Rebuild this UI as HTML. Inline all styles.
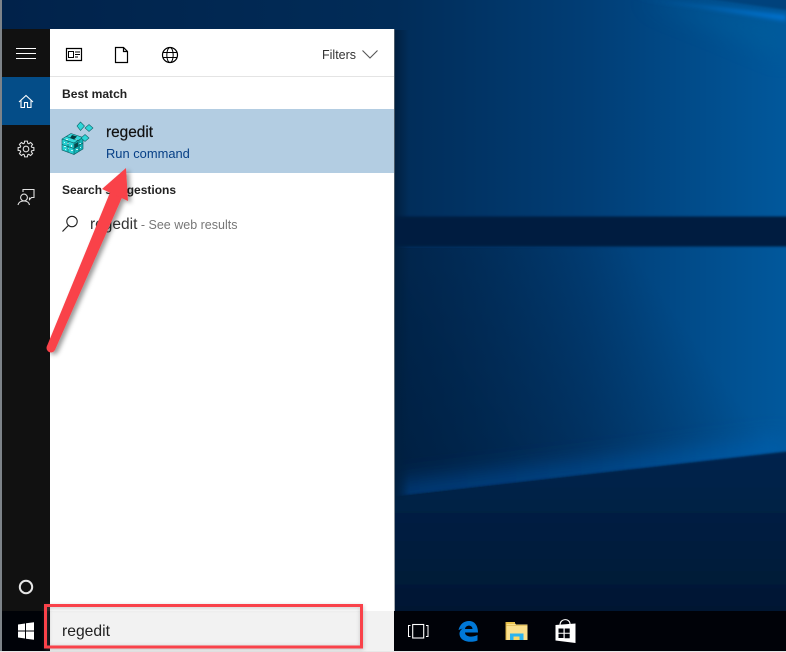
<!DOCTYPE html>
<html><head><meta charset="utf-8">
<style>
html,body{margin:0;padding:0;background:#000}
#r{position:relative;width:786px;height:652px;overflow:hidden;font-family:"Liberation Sans",sans-serif}
.a{position:absolute}
.t{position:absolute;white-space:nowrap;line-height:18px;height:18px}
svg{position:absolute;left:0;top:0;overflow:visible}
</style></head><body>
<div id="r">
<svg width="786" height="652" viewBox="0 0 786 652">
<defs>
<linearGradient id="h" gradientUnits="userSpaceOnUse" x1="394" x2="786" y1="0" y2="0"><stop offset="0" stop-color="#012c58"/><stop offset=".5" stop-color="#013e76"/><stop offset="1" stop-color="#01589c"/></linearGradient>
<linearGradient id="tl" gradientUnits="userSpaceOnUse" x1="0" x2="394" y1="0" y2="0"><stop offset="0" stop-color="#01224a"/><stop offset="1" stop-color="#012c58"/></linearGradient>
<linearGradient id="dk" gradientUnits="userSpaceOnUse" x1="394" y1="480" x2="660" y2="290"><stop offset="0" stop-color="#001c3c" stop-opacity=".8"/><stop offset="1" stop-color="#001c3c" stop-opacity="0"/></linearGradient>
<linearGradient id="low" x1="0" x2="0" y1="0" y2="1"><stop offset="0" stop-color="#00254e"/><stop offset="1" stop-color="#00152e"/></linearGradient>
<linearGradient id="glow" gradientUnits="userSpaceOnUse" x1="394" x2="786" y1="0" y2="0"><stop offset="0" stop-color="#003a78"/><stop offset=".5" stop-color="#004688"/><stop offset="1" stop-color="#005fac"/></linearGradient>
<linearGradient id="lf" x1="0" x2="1" y1="0" y2="0"><stop offset="0" stop-color="#012040"/><stop offset="1" stop-color="#012040" stop-opacity="0"/></linearGradient>
<linearGradient id="streak" gradientUnits="userSpaceOnUse" x1="620" x2="786" y1="0" y2="0"><stop offset="0" stop-color="#0163b0" stop-opacity="0"/><stop offset=".4" stop-color="#0168bc"/><stop offset="1" stop-color="#0172d0"/></linearGradient>
<filter id="b12" filterUnits="userSpaceOnUse" x="0" y="-50" width="900" height="800"><feGaussianBlur stdDeviation="11"/></filter>
<filter id="b3" filterUnits="userSpaceOnUse" x="0" y="-50" width="900" height="800"><feGaussianBlur stdDeviation="2.2"/></filter>
<filter id="b1" filterUnits="userSpaceOnUse" x="0" y="-50" width="900" height="800"><feGaussianBlur stdDeviation="1"/></filter>
<filter id="sh" filterUnits="userSpaceOnUse" x="0" y="100" width="300" height="300"><feDropShadow dx="3" dy="2" stdDeviation="2.5" flood-color="#000" flood-opacity=".4"/></filter>
<clipPath id="sl"><polygon points="394,0 786,0 786,452 394,497"/></clipPath>
<clipPath id="bg"><rect x="0" y="0" width="786" height="611"/></clipPath>
</defs>
<g clip-path="url(#bg)">
<rect width="786" height="611" x="0" y="0" fill="url(#h)"/>
<rect x="0" y="0" width="394" height="30" fill="url(#tl)"/>
<!-- lower-left darkening -->
<rect x="394" y="248" width="392" height="255" fill="url(#dk)"/>
<!-- top streak -->
<polygon points="640,0 786,18 786,60 720,32" fill="#01629f" filter="url(#b12)" opacity=".45"/>
<polygon points="620,-3 786,15 786,21 700,7" fill="url(#streak)" filter="url(#b3)"/>
<polygon points="660,-8 800,-8 800,12 730,2" fill="#01427c" filter="url(#b1)"/>
<!-- glow above slant -->
<g clip-path="url(#sl)"><polygon points="394,510 786,465 786,438 394,483" fill="url(#glow)" filter="url(#b12)"/></g>
<!-- lower part -->
<polygon points="380,498 800,450 800,640 380,640" fill="url(#low)" filter="url(#b1)"/>
<rect x="395" y="30" width="14" height="470" fill="url(#lf)"/>
<!-- band -->
<rect x="380" y="216.5" width="420" height="30" fill="#011f41" filter="url(#b1)"/>
</g>
<rect x="0" y="0" width="2" height="652" fill="#7d8389"/>
</svg>

<div class="a" style="left:2px;top:29px;width:48px;height:582px;background:#111"></div>
<div class="a" style="left:2px;top:77px;width:48px;height:48px;background:#044d88"></div>
<div class="a" style="left:50px;top:29px;width:344px;height:582px;background:#fff"></div>
<div class="a" style="left:394px;top:29px;width:1px;height:582px;background:linear-gradient(#4a5a68 50%,#a8adb2)"></div>
<div class="a" style="left:50px;top:76px;width:344px;height:1px;background:#e4e4e4"></div>
<div class="a" style="left:50px;top:109px;width:344px;height:64px;background:#b3cde2"></div>
<div class="a" style="left:2px;top:611px;width:784px;height:40px;background:#000208"></div>
<div class="a" style="left:50px;top:611px;width:344px;height:40px;background:#f2f2f2"></div>
<div class="a" style="left:0;top:651px;width:786px;height:1px;background:#e8e8e8"></div>

<div class="t" style="left:62px;top:85px;font-size:12.1px;font-weight:bold;color:#222">Best match</div>
<div class="t" style="left:106px;top:124px;font-size:15.4px;color:#111;-webkit-text-stroke:.2px #111">regedit</div>
<div class="t" style="left:106px;top:145px;font-size:12.9px;color:#063f86">Run command</div>
<div class="t" style="left:62px;top:181px;font-size:12px;font-weight:bold;color:#222">Search suggestions</div>
<div class="t" style="left:90px;top:216px;font-size:15.5px;color:#333">regedit<span style="font-size:12.5px;color:#777"> - See web results</span></div>
<div class="t" style="left:322px;top:46px;font-size:12.5px;color:#333">Filters</div>
<div class="t" style="left:62px;top:623px;font-size:15.7px;color:#222">regedit</div>

<svg width="786" height="652" viewBox="0 0 786 652">
<!-- hamburger -->
<path d="M16 48.5H36M16 53.5H36M16 58.5H36" stroke="#fff" stroke-width="1" fill="none"/>
<!-- home -->
<path d="M19 102L26 95.5L33 102M21 100.5V107.5H24.5V102.5H27.5V107.5H31V100.5" stroke="#fff" stroke-width="1.1" fill="none"/>
<!-- gear -->
<g transform="translate(26 149)" stroke="#e0e0e0" stroke-width="1.1" fill="none">
<circle r="2.8"/>
<path d="M5.74 -1.75L7.88 -1.39L7.88 1.39L5.74 1.75L5.30 2.82L6.55 4.59L4.59 6.55L2.82 5.30L1.75 5.74L1.39 7.88L-1.39 7.88L-1.75 5.74L-2.82 5.30L-4.59 6.55L-6.55 4.59L-5.30 2.82L-5.74 1.75L-7.88 1.39L-7.88 -1.39L-5.74 -1.75L-5.30 -2.82L-6.55 -4.59L-4.59 -6.55L-2.82 -5.30L-1.75 -5.74L-1.39 -7.88L1.39 -7.88L1.75 -5.74L2.82 -5.30L4.59 -6.55L6.55 -4.59L5.30 -2.82Z"/>
</g>
<!-- feedback -->
<circle cx="24" cy="197.5" r="3.4" stroke="#e0e0e0" stroke-width="1.1" fill="none"/>
<path d="M18 205C18.5 202.5 20.5 201 24 201C27 201 29 202.5 29.5 205M23 192V189.5H34V197.5H31.5L29.5 199.5V197.5" stroke="#e0e0e0" stroke-width="1.1" fill="none"/>
<!-- cortana -->
<circle cx="26" cy="587" r="6.2" stroke="#e6e6e6" stroke-width="2" fill="none"/>
<!-- windows -->
<path d="M18 624.5L25 623.5V630.5H18ZM26 623.3L34 622.3V630.5H26ZM18 631.5H25V638.5L18 637.5ZM26 631.5H34V639.7L26 638.7Z" fill="#fff"/>
<!-- news -->
<path d="M66.5 48.5H81.5V60.5H66.5Z" stroke="#000" stroke-width="1.2" fill="none"/>
<path d="M68.5 51.5H73.5V57.5H68.5ZM75 52H80M75 54.5H80M75 57H78" stroke="#000" stroke-width="1" fill="none"/>
<!-- doc -->
<path d="M115.5 47.5H123.5L127.5 51.5V62.5H115.5ZM123.5 47.5V51.5H127.5" stroke="#000" stroke-width="1.2" fill="none"/>
<!-- globe -->
<circle cx="170" cy="55" r="7.5" stroke="#000" stroke-width="1.2" fill="none"/>
<ellipse cx="170" cy="55" rx="3.2" ry="7.5" stroke="#000" stroke-width="1" fill="none"/>
<path d="M163 52.5H177M163 57.5H177" stroke="#000" stroke-width="1" fill="none"/>
<!-- chevron -->
<path d="M362.5 50.5L370 58L377.5 50.5" stroke="#555" stroke-width="1.1" fill="none"/>
<!-- search icon -->
<circle cx="72" cy="221.5" r="5.2" stroke="#222" stroke-width="1.1" fill="none"/>
<path d="M68.3 225.5L62.5 231.5" stroke="#222" stroke-width="1.2" fill="none"/>
<!-- regedit icon -->
<polygon points="62,139 74,143 74,154.5 62,150" fill="#27cfd2"/>
<polygon points="74,143 83,137.5 83,149 74,154.5" fill="#14b4b8"/>
<polygon points="62,139 71,133.5 83,137.5 74,143" fill="#35d8da"/>
<g fill="#c8f8f8">
<rect x="64" y="142" width="1" height="1"/><rect x="67" y="143" width="2" height="1"/><rect x="71" y="145" width="1" height="2"/>
<rect x="64" y="146" width="2" height="1"/><rect x="68" y="148" width="1" height="1"/><rect x="71" y="150" width="2" height="1"/>
<rect x="65" y="149" width="1" height="1"/><rect x="76" y="144" width="1" height="1"/><rect x="79" y="143" width="2" height="1"/>
<rect x="76" y="149" width="2" height="1"/><rect x="80" y="147" width="1" height="1"/><rect x="66" y="139" width="2" height="1"/>
<rect x="72" y="137" width="1" height="1"/><rect x="75" y="139" width="2" height="1"/>
</g>
<path d="M62 139L74 143L83 137.5M74 143V154.5M62 144.5L74 148.5L83 143M68 141V152.5M79 140V151M66.5 136.5L78 140.5M71 133.5L62 139V150L74 154.5L83 149V137.5L71 133.5" stroke="#06585c" stroke-width=".6" fill="none"/>
<polygon points="72,135 77,136.5 74,139.5 70,138" fill="#073b3e"/>
<polygon points="74.5,144 78,142 78,146.5 74.5,148.5" fill="#0a4a4e"/>
<g stroke="#0b6468" stroke-width=".6">
<polygon points="80.5,122 84.5,126 80.5,130.5 77,126" fill="#2fd6d8"/>
<polygon points="89,124.5 93,128 89,131.5 85,128" fill="#2fd6d8"/>
<polygon points="85,134.5 89,138 85,141.5 81,138" fill="#2fd6d8"/>
</g>
<!-- task view -->
<rect x="412.7" y="624.5" width="11" height="13.5" stroke="#fff" stroke-width="1.1" fill="none"/>
<path d="M410.5 625.5H408.5V636.5H410.5M426 625.5H428V636.5H426" stroke="#fff" stroke-width="1" fill="none"/>
<!-- edge -->
<path d="M458.5 630C460 624 464 621 469 621C475 621 478 626 478 632.5H465C465 636.5 471 638 477.5 635V640.5C470 643.5 459 641.5 459.5 633C460 630.5 462 628.5 464.5 627.5C463 628.5 461 629 458.5 630ZM465 629H472.5C472.5 624.5 465.5 624.5 465 629Z" fill="#0078d7" fill-rule="evenodd"/>
<!-- folder -->
<path d="M506 622H514L516 624.5H527.5V640H506Z" fill="#fbe08c"/>
<rect x="506" y="622" width="9" height="2" fill="#e8c24a"/>
<path d="M506 625.5H527.5" stroke="#e6c460" stroke-width="1"/>
<path d="M510 640V633.5H523.5V640H519.5V636.5H513.5V640Z" fill="#2cb4ee"/>
<rect x="513.5" y="636.5" width="6" height="3.5" fill="#fbd866"/>
<path d="M506 622V640" stroke="#d8b040" stroke-width="1"/>
<!-- store -->
<path d="M555.5 625L575.5 623.5V643L555.5 640.5Z" fill="#fff"/>
<path d="M560 625C560 618 570 618 570 624" stroke="#fff" stroke-width="1.1" fill="none"/>
<path d="M558.5 628.5H563.5V632.7H558.5ZM564.7 628.5H569.7V632.7H564.7ZM558.5 633.8H563.5V638H558.5ZM564.7 633.8H569.7V638.3H564.7Z" fill="#000208"/>
<!-- red box -->
<rect x="46" y="606" width="315" height="41" fill="none" stroke="#777" stroke-width="3" opacity=".45" filter="url(#b3)" transform="translate(1,1)"/>
<rect x="45.5" y="605.5" width="316" height="41.5" fill="none" stroke="#f9424a" stroke-width="3"/>
<!-- arrow -->
<g filter="url(#sh)" fill="#f9424a">
<polygon points="55.1,349.8 46.9,346.2 110,192.5 122,197.5"/>
<circle cx="51" cy="348" r="4.5"/>
<polygon points="126,168 102,189 128,201"/>
</g>
</svg>
</div>
</body></html>
